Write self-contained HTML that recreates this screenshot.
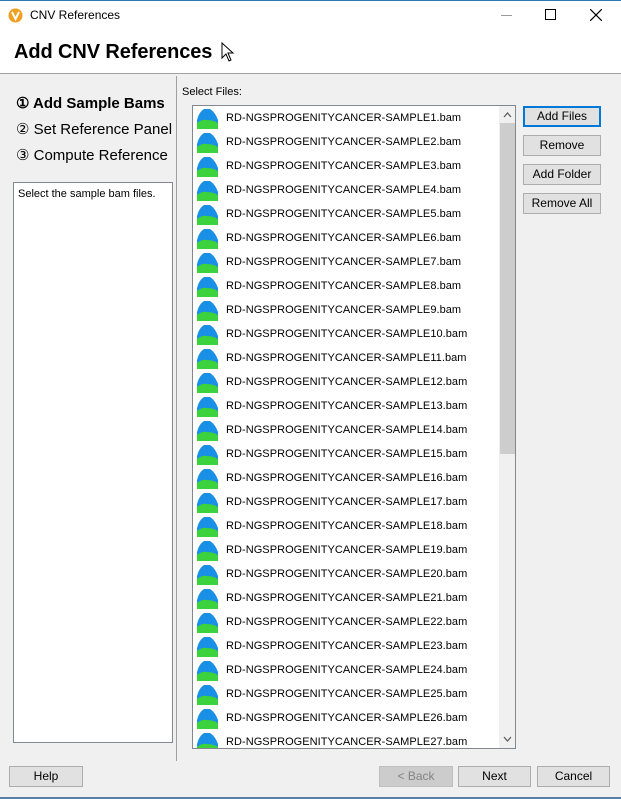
<!DOCTYPE html><html><head><style>
*{margin:0;padding:0;box-sizing:border-box}
body{width:621px;height:799px;background:#f0f0f0;font-family:"Liberation Sans",sans-serif;font-size:12px;position:relative;overflow:hidden;color:#000}
.a{position:absolute}
.btn{position:absolute;height:21px;background:#e1e1e1;border:1px solid #adadad;text-align:center;line-height:19px;font-size:12px}
.row{position:absolute;left:3px;height:24px;width:300px}
.row svg{position:absolute;left:0;top:1px}
.row span{position:absolute;left:30px;top:5px;font-size:11px;letter-spacing:0.05px}
</style></head><body>
<div class="a" style="left:0;top:0;width:621px;height:73px;background:#fff;border-top:1px solid #2d7ab8"></div>
<div class="a" style="left:0;top:73px;width:621px;height:1px;background:#a0a0a0"></div>
<svg class="a" style="left:8px;top:8px" width="15" height="15"><circle cx="7.5" cy="7.5" r="7" fill="#f0a020"/><path d="M4 4 L7.5 11 L11 4" stroke="#fff" stroke-width="2" fill="none"/></svg>
<div class="a" style="left:30px;top:8px;font-size:12px">CNV References</div>
<div class="a" style="left:501px;top:15px;width:11px;height:1px;background:#999"></div>
<div class="a" style="left:545px;top:9px;width:11px;height:11px;border:1px solid #000"></div>
<svg class="a" style="left:590px;top:9px" width="12" height="12"><path d="M0 0L12 12M12 0L0 12" stroke="#000" stroke-width="1.2"/></svg>
<div class="a" style="left:14px;top:41px;font-size:20px;font-weight:bold;letter-spacing:-0.1px">Add CNV References</div>
<svg class="a" style="left:221px;top:42px" width="14" height="20"><path d="M1 1 L1 16 L5 12 L8 19 L10 18 L7 11 L12 11 Z" fill="#fff" stroke="#000"/></svg>
<div class="a" style="left:16px;top:94px;font-size:15px"><b>① Add Sample Bams</b></div>
<div class="a" style="left:16px;top:120px;font-size:15px">② Set Reference Panel</div>
<div class="a" style="left:16px;top:146px;font-size:15px">③ Compute Reference</div>
<div class="a" style="left:13px;top:182px;width:160px;height:561px;background:#fff;border:1px solid #828790"></div>
<div class="a" style="left:18px;top:188px;font-size:11px">Select the sample bam files.</div>
<div class="a" style="left:176px;top:76px;width:1px;height:685px;background:#a0a0a0"></div>
<div class="a" style="left:182px;top:86px;font-size:11px">Select Files:</div>
<div class="a" style="left:192px;top:105px;width:324px;height:644px;background:#fff;border:1px solid #828790;overflow:hidden">
<div class="a" style="left:306px;top:0;width:17px;height:642px;background:#f0f0f0"></div>
<div class="a" style="left:307px;top:17px;width:15px;height:331px;background:#cdcdcd"></div>
<svg class="a" style="left:310px;top:6px" width="9" height="6"><path d="M1 5L4.5 1L8 5" stroke="#606060" fill="none" stroke-width="1.3"/></svg>
<svg class="a" style="left:310px;top:630px" width="9" height="6"><path d="M1 1L4.5 5L8 1" stroke="#606060" fill="none" stroke-width="1.3"/></svg>
<div id="l"></div>
</div>
<div class="btn" style="left:523px;top:106px;width:78px;border:2px solid #0078d7;line-height:17px">Add Files</div>
<div class="btn" style="left:523px;top:135px;width:78px">Remove</div>
<div class="btn" style="left:523px;top:164px;width:78px">Add Folder</div>
<div class="btn" style="left:523px;top:193px;width:78px">Remove All</div>
<div class="btn" style="left:9px;top:766px;width:74px">Help</div>
<div class="btn" style="left:379px;top:766px;width:74px;background:#cccccc;border-color:#bfbfbf;color:#838383">&lt; Back</div>
<div class="btn" style="left:458px;top:766px;width:73px">Next</div>
<div class="btn" style="left:537px;top:766px;width:73px">Cancel</div>
<div class="a" style="left:0;top:797px;width:621px;height:2px;background:#5a7fa0"></div>
<script>
var h='';for(var i=1;i<=27;i++){var t=i*24-24+1;h+='<div class="row" style="top:'+t+'px"><svg width="23" height="22"><path d="M1 21 L1 12 Q3 4 8 1 L14 1 Q19 4 22 12 L22 21 Z" fill="#1a8fe6"/><path d="M1 21 L1 15 Q6 11 11 12 Q17 12 22 15 L22 21 Z" fill="#3cd23c"/></svg><span>RD-NGSPROGENITYCANCER-SAMPLE'+i+'.bam</span></div>';}
document.getElementById('l').innerHTML=h;
</script>
</body></html>
